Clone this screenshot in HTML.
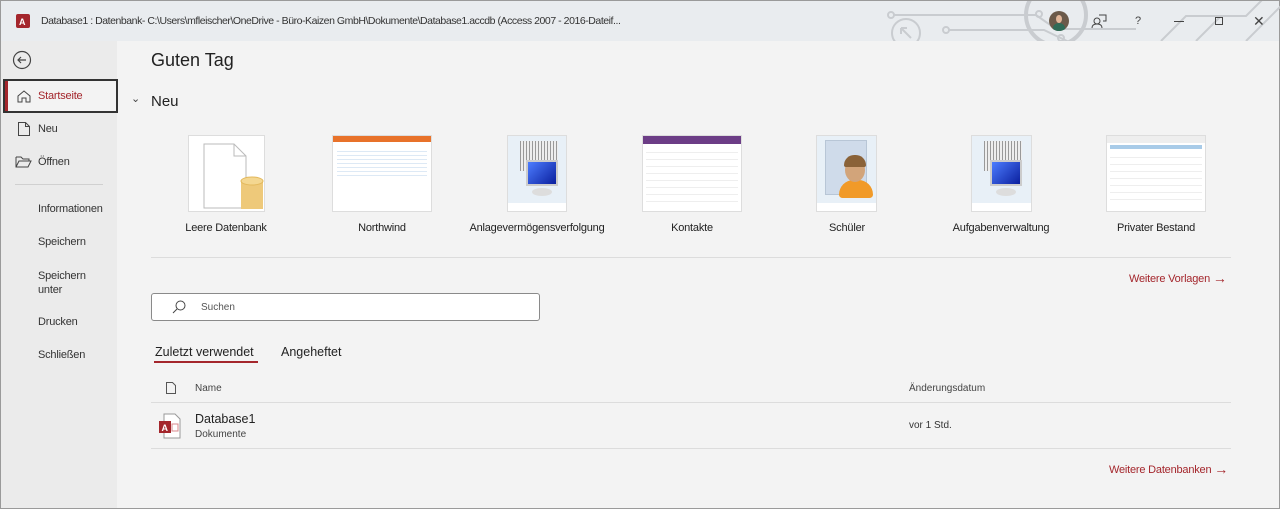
<!DOCTYPE html>
<html><head><meta charset="utf-8"><style>
*{margin:0;padding:0;box-sizing:border-box}
body{width:1280px;height:509px;overflow:hidden;font-family:"Liberation Sans",sans-serif;background:#f3f3f3;position:relative;color:#262626}
.abs{position:absolute}
#win{position:absolute;left:0;top:0;width:1280px;height:509px;border:1px solid #9a9a9a}
#title{left:1px;top:1px;width:1278px;height:40px;background:#e9ecef}
#side{left:1px;top:41px;width:116px;height:467px;background:#ebebeb}
.nav{position:absolute;left:37px;font-size:11px;color:#333;letter-spacing:-0.2px}
.lbl{position:absolute;font-size:11px;color:#222;text-align:center;width:160px;letter-spacing:-0.2px}
.thumb{position:absolute;top:135px;height:77px;background:#fff;border:1px solid #ddd}
</style></head><body>
<div id="win"></div>
<div id="title" class="abs">
<svg class="abs" style="left:14px;top:12px" width="16" height="16"><rect x="1" y="1" width="14" height="14" rx="2" fill="#a4262c"/><text x="4" y="12" font-size="9" fill="#fff" font-family="Liberation Sans" font-weight="bold">A</text></svg>
<div class="abs" style="left:40px;top:14px;font-size:10.5px;color:#333;white-space:nowrap;letter-spacing:-0.45px">Database1 : Datenbank- C:\Users\mfleischer\OneDrive - Büro-Kaizen GmbH\Dokumente\Database1.accdb (Access 2007 - 2016-Dateif...</div>
<svg class="abs" style="left:860px;top:0" width="420" height="40" fill="none" stroke="#c9ccd0" stroke-width="2">
<circle cx="30" cy="14" r="3"/><path d="M33 14H175l20 14h80"/><circle cx="178" cy="13" r="3"/>
<circle cx="45" cy="32" r="14"/><path d="M40 27l10 10M40 27h6M40 27v6"/>
<circle cx="85" cy="29" r="3"/><path d="M88 29h95l25 12"/><circle cx="200" cy="37" r="3"/>
<circle cx="195" cy="14" r="30" stroke-width="4"/>
<path d="M300 40l25-25h60l20-20M335 40l25-25M385 40l35-35"/>
</svg>
<div class="abs" style="left:1048px;top:10px;width:20px;height:20px;border-radius:50%;background:#6b5a4a;overflow:hidden"><div style="position:absolute;left:4px;top:12px;width:12px;height:10px;border-radius:50%;background:#2f6b57"></div><div style="position:absolute;left:7px;top:4px;width:6px;height:8px;border-radius:50%;background:#e2b79a"></div></div>
<svg class="abs" style="left:1090px;top:12px" width="16" height="16" fill="none" stroke="#444" stroke-width="1"><circle cx="6" cy="8" r="3"/><path d="M1 15c0-3 2-4 5-4s5 1 5 4M8 2h7v6h-3"/></svg>
<div class="abs" style="left:1134px;top:14px;font-size:11px;color:#444">?</div>
<div class="abs" style="left:1173px;top:20px;width:10px;height:1px;background:#444"></div>
<div class="abs" style="left:1214px;top:16px;width:8px;height:8px;border:1px solid #444"></div>
<div class="abs" style="left:1252px;top:12px;font-size:14px;color:#444">✕</div>
</div>
<div id="side" class="abs">
<svg class="abs" style="left:11px;top:9px" width="20" height="20" fill="none" stroke="#444" stroke-width="1.2"><circle cx="10" cy="10" r="8.5"/><path d="M14 10H6M9 7l-3 3 3 3"/></svg>
<div class="abs" style="left:2px;top:38px;width:115px;height:34px;border:2px solid #333;background:#f3f3f3"></div>
<div class="abs" style="left:4px;top:40px;width:3px;height:30px;background:#a4262c"></div>
<svg class="abs" style="left:15px;top:47px" width="16" height="16" fill="none" stroke="#444"><path d="M2 8l6-5 6 5v6H10v-4H6v4H2z"/></svg>
<div class="nav" style="top:49px;color:#a4262c">Startseite</div>
<svg class="abs" style="left:16px;top:80px" width="14" height="16" fill="none" stroke="#444"><path d="M1.5 1.5h7l4 4v9h-11z M8.5 1.5v4h4"/></svg>
<div class="nav" style="top:82px">Neu</div>
<svg class="abs" style="left:14px;top:114px" width="18" height="14" fill="none" stroke="#444"><path d="M1 2h5l2 2h6v2M1 2v10h12l3-6H4l-3 6"/></svg>
<div class="nav" style="top:115px">Öffnen</div>
<div class="abs" style="left:14px;top:143px;width:88px;height:1px;background:#d0d0d0"></div>
<div class="nav" style="top:162px">Informationen</div>
<div class="nav" style="top:195px">Speichern</div>
<div class="nav" style="top:228px;line-height:14px">Speichern<br>unter</div>
<div class="nav" style="top:275px">Drucken</div>
<div class="nav" style="top:308px">Schließen</div>
</div>

<div class="abs" style="left:151px;top:50px;font-size:18px;color:#222">Guten Tag</div>
<div class="abs" style="left:131px;top:92px;font-size:11px;color:#444">⌄</div>
<div class="abs" style="left:151px;top:93px;font-size:15px;color:#222">Neu</div>

<div class="thumb" style="left:188px;width:77px"><svg width="75" height="75"><path d="M15 8h30l12 12v52H15z" fill="#fff" stroke="#bbb"/><path d="M45 8v12h12" fill="none" stroke="#bbb"/><rect x="52" y="45" width="22" height="28" fill="#eec97a"/><ellipse cx="63" cy="45" rx="11" ry="4" fill="#f4d791" stroke="#e3b85c"/></svg></div>
<div class="thumb" style="left:332px;width:100px"><div style="height:6px;background:#e8722a"></div><div style="margin:6px 4px;height:28px;background:repeating-linear-gradient(#fff 0 3px,#dde9f5 3px 4px)"></div></div>
<div class="thumb" style="left:507px;width:60px;background:#e8f0f7"><div style="position:absolute;left:12px;top:5px;width:38px;height:30px;background:repeating-linear-gradient(90deg,#999 0 1px,#eee 1px 3px)"></div><div style="position:absolute;left:18px;top:24px;width:32px;height:26px;background:linear-gradient(135deg,#4d7dff,#0a1f9e);border:2px solid #ccc"></div><div style="position:absolute;left:24px;top:52px;width:20px;height:8px;border-radius:50%;background:#ddd"></div><div style="position:absolute;left:0;bottom:0;width:58px;height:8px;background:#fff"></div></div>
<div class="thumb" style="left:642px;width:100px"><div style="height:8px;background:#6c3d86"></div><div style="margin:2px 3px;height:60px;background:repeating-linear-gradient(#fff 0 6px,#eee 6px 7px)"></div></div>
<div class="thumb" style="left:816px;width:61px;background:#e8f0f7"><div style="position:absolute;left:8px;top:4px;width:42px;height:55px;background:#cfdbea;border:1px solid #b8c6d6"></div><div style="position:absolute;left:22px;top:44px;width:34px;height:18px;border-radius:17px 17px 4px 4px;background:#f19a28"></div><div style="position:absolute;left:28px;top:22px;width:20px;height:24px;border-radius:50%;background:#d2a47a"></div><div style="position:absolute;left:27px;top:19px;width:22px;height:12px;border-radius:11px 11px 2px 2px;background:#8a6238"></div><div style="position:absolute;left:0;bottom:0;width:59px;height:8px;background:#fff"></div></div>
<div class="thumb" style="left:971px;width:61px;background:#e8f0f7"><div style="position:absolute;left:12px;top:5px;width:38px;height:30px;background:repeating-linear-gradient(90deg,#999 0 1px,#eee 1px 3px)"></div><div style="position:absolute;left:18px;top:24px;width:32px;height:26px;background:linear-gradient(135deg,#4d7dff,#0a1f9e);border:2px solid #ccc"></div><div style="position:absolute;left:24px;top:52px;width:20px;height:8px;border-radius:50%;background:#ddd"></div><div style="position:absolute;left:0;bottom:0;width:59px;height:8px;background:#fff"></div></div>
<div class="thumb" style="left:1106px;width:100px"><div style="height:7px;background:#eee"></div><div style="margin:2px 3px;height:4px;background:#a8cbe8"></div><div style="margin:0 3px;height:55px;background:repeating-linear-gradient(#fff 0 6px,#eee 6px 7px)"></div></div>

<div class="lbl" style="left:146px;top:222px">Leere Datenbank</div>
<div class="lbl" style="left:302px;top:222px">Northwind</div>
<div class="lbl" style="left:457px;top:222px">Anlagevermögensverfolgung</div>
<div class="lbl" style="left:612px;top:222px">Kontakte</div>
<div class="lbl" style="left:767px;top:222px">Schüler</div>
<div class="lbl" style="left:921px;top:222px">Aufgabenverwaltung</div>
<div class="lbl" style="left:1076px;top:222px">Privater Bestand</div>

<div class="abs" style="left:151px;top:257px;width:1080px;height:1px;background:#dcdcdc"></div>
<div class="abs" style="left:1129px;top:269px;font-size:11px;color:#a4262c;letter-spacing:-0.2px">Weitere Vorlagen <span style="font-size:14px;position:relative;top:1px">→</span></div>

<div class="abs" style="left:151px;top:293px;width:389px;height:28px;background:#fff;border:1px solid #8a8a8a;border-radius:3px"></div>
<svg class="abs" style="left:172px;top:300px" width="14" height="14" fill="none" stroke="#444"><circle cx="8.5" cy="5.5" r="4.5"/><path d="M5 9l-4 4"/></svg>
<div class="abs" style="left:201px;top:302px;font-size:10px;color:#555">Suchen</div>

<div class="abs" style="left:155px;top:345px;font-size:12.5px;color:#222">Zuletzt verwendet</div>
<div class="abs" style="left:154px;top:361px;width:104px;height:2px;background:#a4262c"></div>
<div class="abs" style="left:281px;top:345px;font-size:12.5px;color:#222">Angeheftet</div>

<svg class="abs" style="left:165px;top:381px" width="12" height="14" fill="none" stroke="#555"><path d="M1.5 1.5h6l3 3v8h-9z"/></svg>
<div class="abs" style="left:195px;top:383px;font-size:10px;color:#444">Name</div>
<div class="abs" style="left:909px;top:383px;font-size:10px;color:#444">Änderungsdatum</div>
<div class="abs" style="left:151px;top:402px;width:1080px;height:1px;background:#dcdcdc"></div>
<svg class="abs" style="left:158px;top:413px" width="24" height="26"><path d="M6 1h11l5 5v19H6z" fill="#fff" stroke="#999"/><rect x="1" y="8" width="12" height="12" fill="#a4262c"/><text x="3.5" y="18" font-size="9" fill="#fff" font-family="Liberation Sans" font-weight="bold">A</text><rect x="14" y="11" width="6" height="7" fill="none" stroke="#d9888c"/></svg>
<div class="abs" style="left:195px;top:412px;font-size:12.5px;color:#222">Database1</div>
<div class="abs" style="left:195px;top:429px;font-size:10px;color:#444">Dokumente</div>
<div class="abs" style="left:909px;top:420px;font-size:10px;color:#333">vor 1 Std.</div>
<div class="abs" style="left:151px;top:448px;width:1080px;height:1px;background:#dcdcdc"></div>
<div class="abs" style="left:1109px;top:460px;font-size:11px;color:#a4262c;letter-spacing:-0.2px">Weitere Datenbanken <span style="font-size:14px;position:relative;top:1px">→</span></div>
</body></html>
